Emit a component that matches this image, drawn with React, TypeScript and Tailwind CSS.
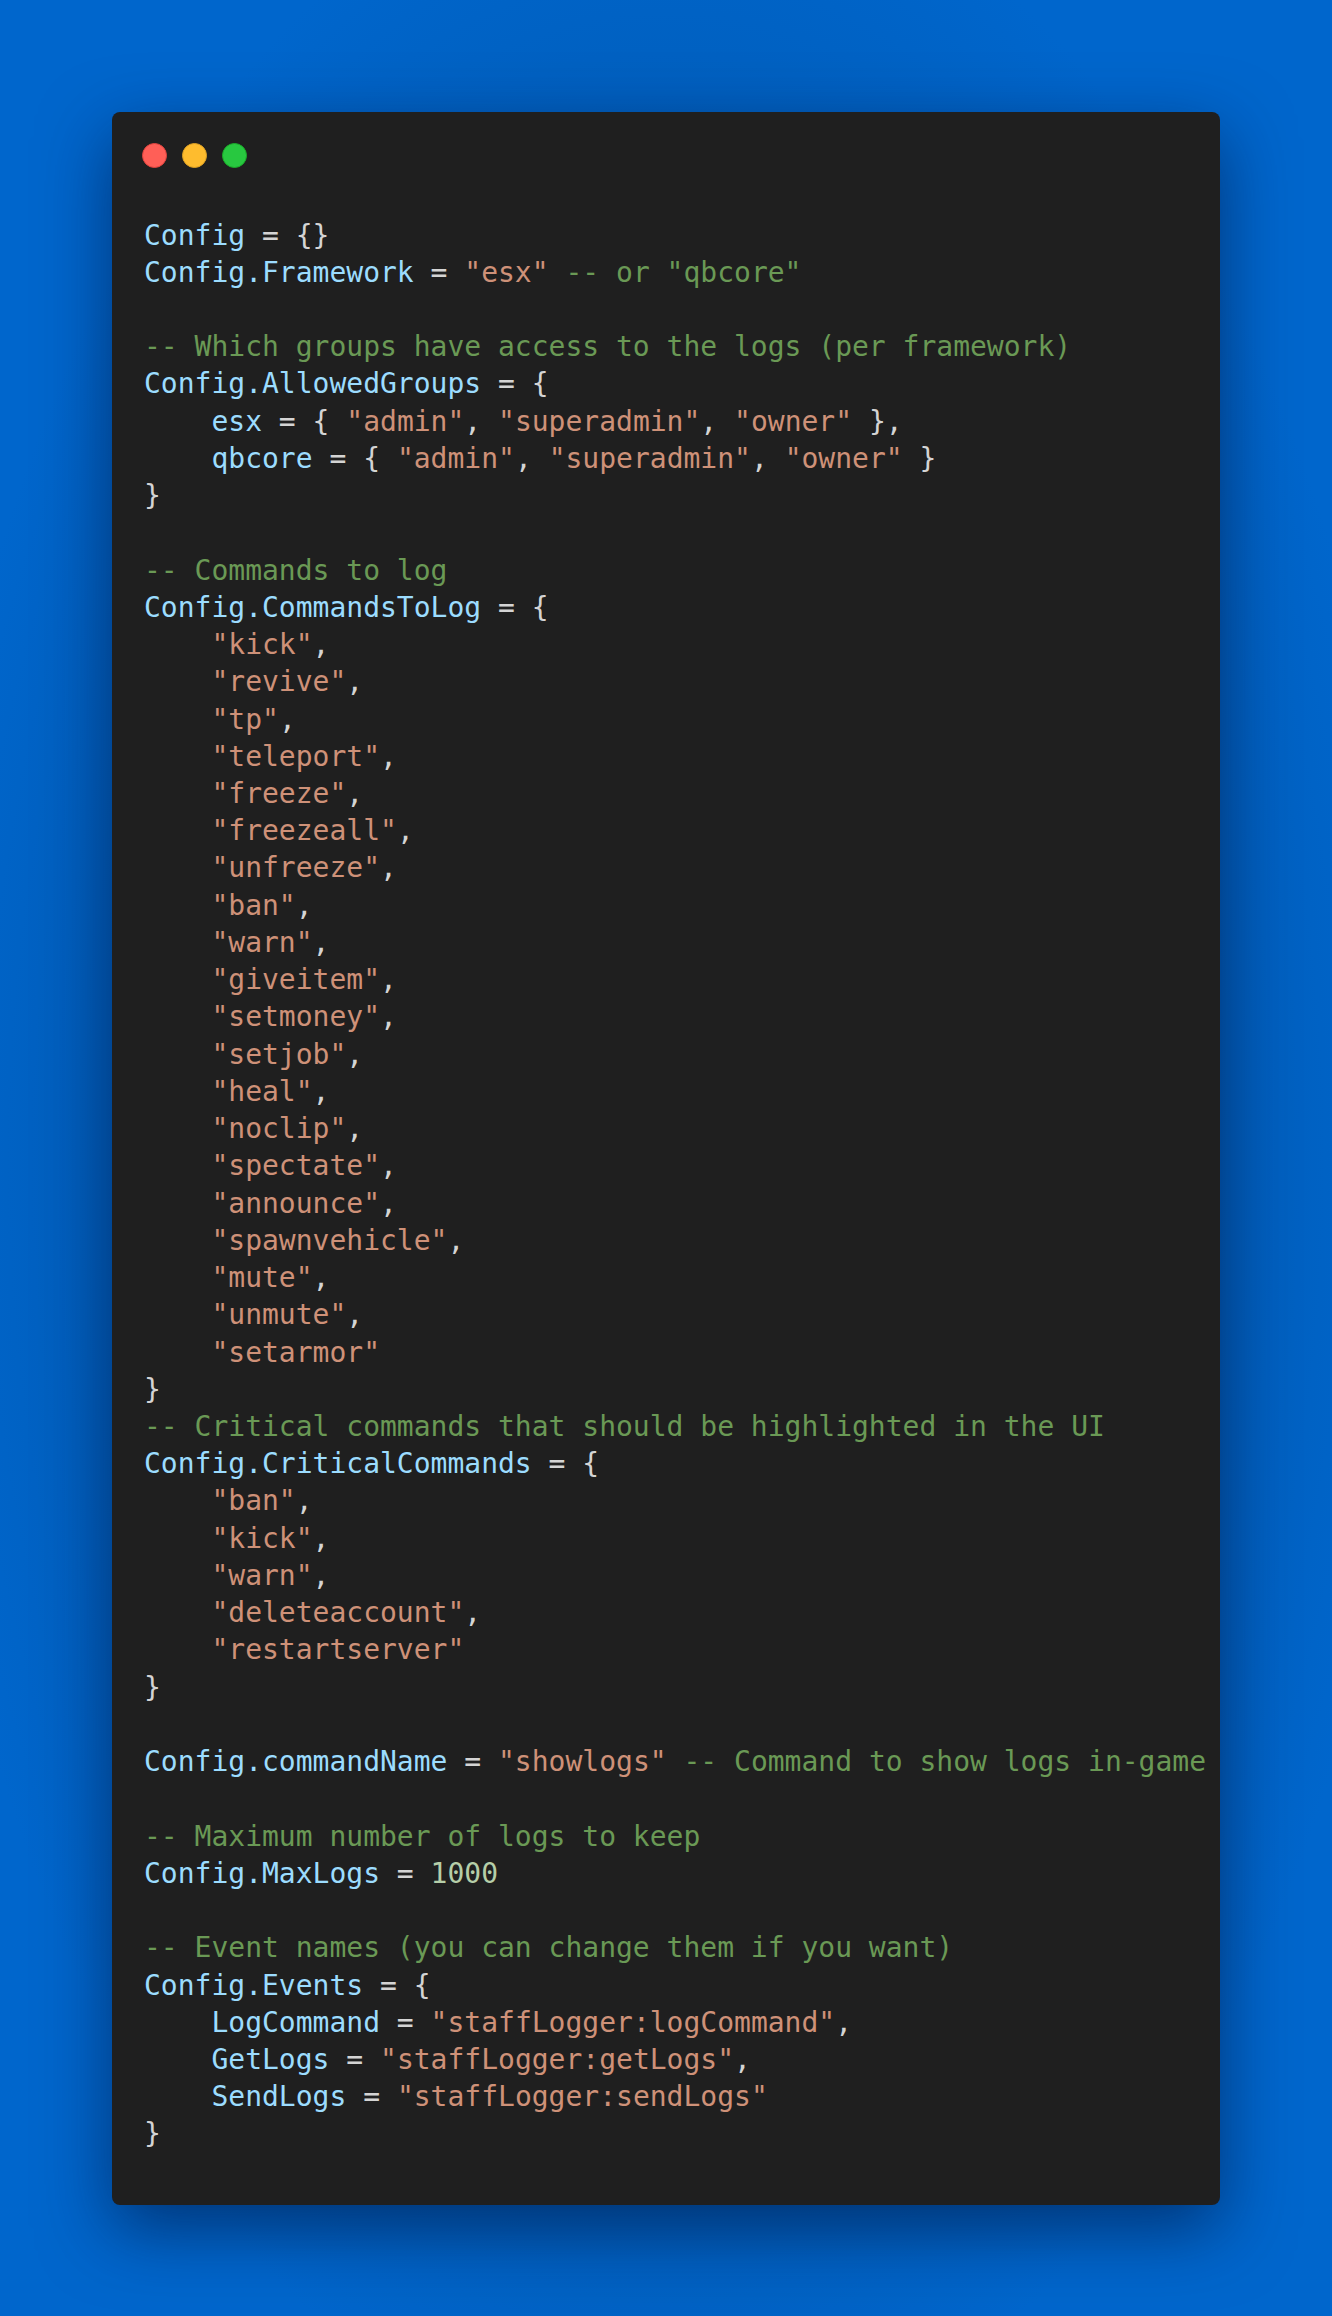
import React from "react";

type Tok = [string, string];

const color: Record<string, string> = {
  i: "text-[#9cdcfe]",
  s: "text-[#ce9178]",
  c: "text-[#6a9955]",
  n: "text-[#b5cea8]",
  p: "text-[#d4d4d4]",
};

const str = (v: string, last = false): Tok[][] => [
  [["p", "    "], ["s", `"${v}"`], ["p", last ? "" : ","]],
];

const lines: Tok[][] = [
  [["i", "Config"], ["p", " = {}"]],
  [["i", "Config.Framework"], ["p", " = "], ["s", '"esx"'], ["c", ' -- or "qbcore"']],
  [],
  [["c", "-- Which groups have access to the logs (per framework)"]],
  [["i", "Config.AllowedGroups"], ["p", " = {"]],
  [["p", "    "], ["i", "esx"], ["p", " = { "], ["s", '"admin"'], ["p", ", "], ["s", '"superadmin"'], ["p", ", "], ["s", '"owner"'], ["p", " },"]],
  [["p", "    "], ["i", "qbcore"], ["p", " = { "], ["s", '"admin"'], ["p", ", "], ["s", '"superadmin"'], ["p", ", "], ["s", '"owner"'], ["p", " }"]],
  [["p", "}"]],
  [],
  [["c", "-- Commands to log"]],
  [["i", "Config.CommandsToLog"], ["p", " = {"]],
  ...["kick", "revive", "tp", "teleport", "freeze", "freezeall", "unfreeze", "ban", "warn", "giveitem", "setmoney", "setjob", "heal", "noclip", "spectate", "announce", "spawnvehicle", "mute", "unmute"].flatMap((v) => str(v)),
  ...str("setarmor", true),
  [["p", "}"]],
  [["c", "-- Critical commands that should be highlighted in the UI"]],
  [["i", "Config.CriticalCommands"], ["p", " = {"]],
  ...["ban", "kick", "warn", "deleteaccount"].flatMap((v) => str(v)),
  ...str("restartserver", true),
  [["p", "}"]],
  [],
  [["i", "Config.commandName"], ["p", " = "], ["s", '"showlogs"'], ["c", " -- Command to show logs in-game"]],
  [],
  [["c", "-- Maximum number of logs to keep"]],
  [["i", "Config.MaxLogs"], ["p", " = "], ["n", "1000"]],
  [],
  [["c", "-- Event names (you can change them if you want)"]],
  [["i", "Config.Events"], ["p", " = {"]],
  [["p", "    "], ["i", "LogCommand"], ["p", " = "], ["s", '"staffLogger:logCommand"'], ["p", ","]],
  [["p", "    "], ["i", "GetLogs"], ["p", " = "], ["s", '"staffLogger:getLogs"'], ["p", ","]],
  [["p", "    "], ["i", "SendLogs"], ["p", " = "], ["s", '"staffLogger:sendLogs"']],
  [["p", "}"]],
];

export default function App() {
  return (
    <div className="w-[1332px] min-h-[2316px] bg-[radial-gradient(ellipse_at_center,#004f9e_0%,#0058b0_45%,#0066cc_80%)] p-[112px]">
      <div className="rounded-lg bg-[#1f1f1f] pl-[32px] pr-4 pt-[31px] pb-[52px] shadow-[0_24px_70px_rgba(0,20,60,0.6)]">
        <div className="flex gap-[15px] -ml-[2px]">
          <span className="h-[25px] w-[25px] rounded-full border border-[#e0443e] bg-[#ff5f57]" />
          <span className="h-[25px] w-[25px] rounded-full border border-[#dea123] bg-[#febc2e]" />
          <span className="h-[25px] w-[25px] rounded-full border border-[#1aab29] bg-[#28c840]" />
        </div>
        <pre className="mt-[48.5px] whitespace-pre font-['DejaVu_Sans_Mono',monospace] text-[28px] leading-[37.24px] text-[#d4d4d4]">
          {lines.map((l, i) => (
            <div key={i} className="h-[37.24px]">
              {l.map(([t, v], j) => (
                <span key={j} className={color[t]}>
                  {v}
                </span>
              ))}
            </div>
          ))}
        </pre>
      </div>
    </div>
  );
}
